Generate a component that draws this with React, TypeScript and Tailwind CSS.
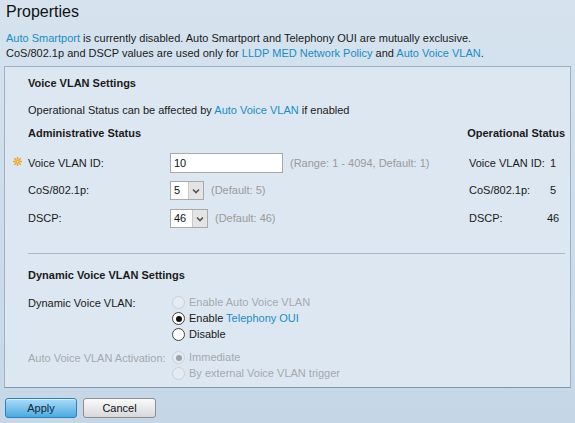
import React from "react";

const Star = () => (
  <svg width="9" height="9" viewBox="0 0 10 10" className="absolute left-[-15px] top-[2px]">
    <g fill="#f0a020">
      <circle cx="5" cy="5" r="2.6" />
      <rect x="4.2" y="0" width="1.6" height="2.4" />
      <rect x="4.2" y="7.6" width="1.6" height="2.4" />
      <rect x="0" y="4.2" width="2.4" height="1.6" />
      <rect x="7.6" y="4.2" width="2.4" height="1.6" />
      <rect x="4.2" y="0" width="1.6" height="2.4" transform="rotate(45 5 5)" />
      <rect x="4.2" y="7.6" width="1.6" height="2.4" transform="rotate(45 5 5)" />
      <rect x="0" y="4.2" width="2.4" height="1.6" transform="rotate(45 5 5)" />
      <rect x="7.6" y="4.2" width="2.4" height="1.6" transform="rotate(45 5 5)" />
    </g>
    <circle cx="5" cy="5" r="1.1" fill="#ffe7a8" />
  </svg>
);

const Select = ({ value, w }: { value: string; w: string }) => (
  <div className={`flex h-[19px] ${w} border border-[#a9a9a9] bg-white`}>
    <div className="flex-1 pl-[3px] leading-[17px] text-[#111]">{value}</div>
    <div className="flex w-[15px] items-center justify-center border-l border-[#c8c8c8] bg-[#e4e4e4]">
      <svg width="8" height="6" viewBox="0 0 8 6">
        <path d="M1 1.5 L4 4.5 L7 1.5" fill="none" stroke="#555" strokeWidth="1.6" />
      </svg>
    </div>
  </div>
);

const Radio = ({ checked, disabled }: { checked?: boolean; disabled?: boolean }) => (
  <span
    className={`flex h-[13px] w-[13px] items-center justify-center rounded-full border ${
      disabled ? "border-[#c9d0d8] bg-[#e4ebf2]" : "border-[#444] bg-white"
    }`}
  >
    {checked && (
      <span className={`h-[6px] w-[6px] rounded-full ${disabled ? "bg-[#9aa3ac]" : "bg-[#111]"}`} />
    )}
  </span>
);

const Link = ({ children }: { children: React.ReactNode }) => (
  <span className="text-[#1b8bc4]">{children}</span>
);

export default function App() {
  return (
    <div
      className="h-[423px] w-[575px] overflow-hidden whitespace-nowrap bg-gradient-to-b from-[#d6e3ef] to-[#c5d7e7] text-[11px] text-[#1a1a1a]"
      style={{ fontFamily: '"Liberation Sans", Arial, sans-serif' }}
    >
      <div className="px-[6px] pt-[2px] text-[16px] leading-[19px] text-[#111]">Properties</div>
      <div className="mt-[10px] px-[6px] leading-[15px]">
        <div>
          <Link>Auto Smartport</Link> is currently disabled. Auto Smartport and Telephony OUI are mutually exclusive.
        </div>
        <div>
          CoS/802.1p and DSCP values are used only for <Link>LLDP MED Network Policy</Link> and{" "}
          <Link>Auto Voice VLAN</Link>.
        </div>
      </div>

      <div className="mx-[4px] mt-[5px] h-[322px] border border-[#9fb0c2] border-b-[#8498ac] bg-[#dde7f1] pl-[23px] pr-[5px]">
        <div className="mt-[9px] font-bold leading-[14px]">Voice VLAN Settings</div>
        <div className="mt-[13px] leading-[14px]">
          Operational Status can be affected by <Link>Auto Voice VLAN</Link> if enabled
        </div>
        <div className="mt-[9px] flex leading-[14px]">
          <div className="w-[441px] font-bold">Administrative Status</div>
          <div className="font-bold">Operational Status</div>
        </div>

        <div className="mt-[13px] flex h-[20px] items-center">
          <div className="flex w-[441px] items-center">
            <div className="relative w-[142px]">
              <Star />
              Voice VLAN ID:
            </div>
            <div className="h-[20px] w-[113px] border border-[#a9a9a9] bg-white pl-[3px] leading-[18px] text-[#111]">
              10
            </div>
            <div className="ml-[7px] text-[#9a9a9a]">(Range: 1 - 4094, Default: 1)</div>
          </div>
          <div className="w-[81px]">Voice VLAN ID:</div>
          <div>1</div>
        </div>

        <div className="mt-[8px] flex h-[19px] items-center">
          <div className="flex w-[441px] items-center">
            <div className="w-[142px]">CoS/802.1p:</div>
            <Select value="5" w="w-[34px]" />
            <div className="ml-[7px] text-[#9a9a9a]">(Default: 5)</div>
          </div>
          <div className="w-[81px]">CoS/802.1p:</div>
          <div>5</div>
        </div>

        <div className="mt-[9px] flex h-[19px] items-center">
          <div className="flex w-[441px] items-center">
            <div className="w-[142px]">DSCP:</div>
            <Select value="46" w="w-[38px]" />
            <div className="ml-[7px] text-[#9a9a9a]">(Default: 46)</div>
          </div>
          <div className="w-[78px]">DSCP:</div>
          <div>46</div>
        </div>

        <div className="mt-[25px] h-px bg-[#aab9c8]" />

        <div className="mt-[14px] font-bold leading-[14px]">Dynamic Voice VLAN Settings</div>

        <div className="mt-[13px] flex">
          <div className="w-[142px] pt-[1px] leading-[14px]">Dynamic Voice VLAN:</div>
          <div className="flex flex-col gap-[3px] pt-[1px]">
            <div className="flex h-[13px] items-center gap-[4px] text-[#a3a9b0]">
              <span className="ml-[2px]"><Radio disabled /></span>
              <span>Enable Auto Voice VLAN</span>
            </div>
            <div className="flex h-[13px] items-center gap-[4px]">
              <span className="ml-[2px]"><Radio checked /></span>
              <span>
                Enable <Link>Telephony OUI</Link>
              </span>
            </div>
            <div className="flex h-[13px] items-center gap-[4px]">
              <span className="ml-[2px]"><Radio /></span>
              <span>Disable</span>
            </div>
          </div>
        </div>

        <div className="mt-[10px] flex text-[#a3a9b0]">
          <div className="w-[142px] pt-[0px] leading-[14px]">Auto Voice VLAN Activation:</div>
          <div className="flex flex-col gap-[3px]">
            <div className="flex h-[13px] items-center gap-[4px]">
              <span className="ml-[2px]"><Radio checked disabled /></span>
              <span>Immediate</span>
            </div>
            <div className="flex h-[13px] items-center gap-[4px]">
              <span className="ml-[2px]"><Radio disabled /></span>
              <span>By external Voice VLAN trigger</span>
            </div>
          </div>
        </div>
      </div>

      <div className="mt-[10px] flex gap-[6px] px-[5px]">
        <button className="h-[20px] w-[72px] rounded-[3px] border border-[#2f7fb8] bg-gradient-to-b from-[#a9dcf7] to-[#4aa9e0] text-[11px] leading-[18px] text-[#0d2a40] shadow-[inset_0_1px_0_#d8f0ff]">
          Apply
        </button>
        <button className="h-[20px] w-[73px] rounded-[3px] border border-[#8d8f93] bg-gradient-to-b from-[#fafafa] to-[#d6d8db] text-[11px] leading-[18px] text-[#111]">
          Cancel
        </button>
      </div>
    </div>
  );
}
